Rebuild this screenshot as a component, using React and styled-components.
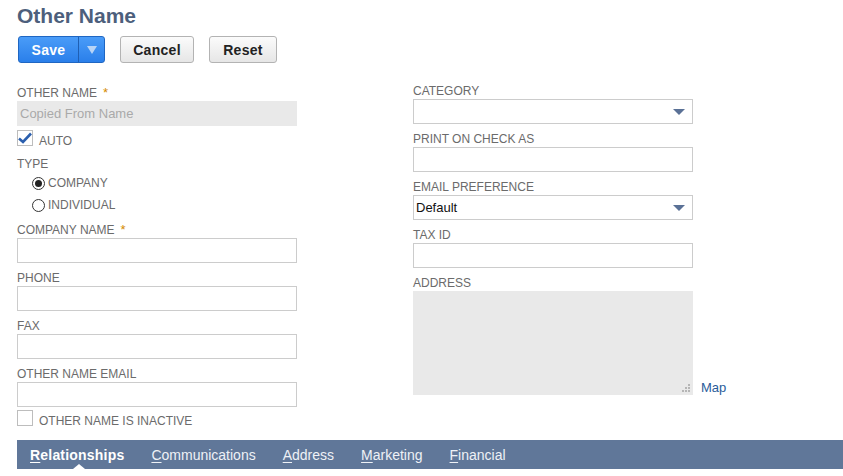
import React from 'react';
import styled, { createGlobalStyle } from 'styled-components';

const GlobalStyle = createGlobalStyle`
  body {
    margin: 0;
    background: #fff;
    font-family: "Liberation Sans", Arial, sans-serif;
  }
`;

const Page = styled.div`
  width: 843px;
  height: 476px;
  overflow: hidden;
  padding-top: 4px;
  box-sizing: border-box;
`;

const Title = styled.h1`
  margin: 0 0 0 17px;
  font-size: 21px;
  line-height: 24px;
  font-weight: 700;
  color: #4d5f7c;
`;

const Toolbar = styled.div`
  display: flex;
  gap: 15px;
  margin: 8px 0 0 18px;
  height: 27px;
`;

const SplitButton = styled.div`
  display: flex;
  border: 1px solid #1f66c2;
  border-radius: 3px;
  overflow: hidden;
  background: linear-gradient(#4a9cf8, #2a7fea);
`;

const SplitMain = styled.button`
  width: 60px;
  border: 0;
  border-right: 1px solid #1f5fb3;
  background: transparent;
  color: #fff;
  font: 700 14px "Liberation Sans", Arial, sans-serif;
  letter-spacing: 0.3px;
  padding: 0;
`;

const SplitArrow = styled.button`
  width: 25px;
  border: 0;
  background: transparent;
  display: flex;
  align-items: center;
  justify-content: center;
  padding: 0;

  &::after {
    content: '';
    border-left: 5px solid transparent;
    border-right: 5px solid transparent;
    border-top: 8px solid #b8d4f6;
  }
`;

const Button = styled.button`
  width: ${(p) => p.width}px;
  border: 1px solid #b3b3b3;
  border-radius: 3px;
  background: linear-gradient(#fbfbfb, #e6e6e6);
  color: #222;
  font: 700 14px "Liberation Sans", Arial, sans-serif;
  letter-spacing: 0.3px;
  padding: 0;
`;

const Columns = styled.div`
  display: flex;
  gap: 116px;
  margin: 21px 0 0 17px;
`;

const Column = styled.div`
  width: 280px;
  display: flex;
  flex-direction: column;
  padding-top: ${(p) => p.offset || 0}px;
`;

const Label = styled.div`
  font-size: 12px;
  line-height: 14px;
  color: #6b6b6b;
  margin-top: ${(p) => p.gap ?? 8}px;
  margin-bottom: 1px;
  white-space: nowrap;
`;

const Required = styled.span`
  color: #d48a00;
  margin-left: 6px;
  font-size: 13px;
`;

const Input = styled.div`
  height: 25px;
  box-sizing: border-box;
  border: 1px solid ${(p) => (p.disabled ? '#e9e9e9' : '#cccccc')};
  background: ${(p) => (p.disabled ? '#e9e9e9' : '#fff')};
  font-size: 13px;
  line-height: 23px;
  padding-left: 2px;
  color: ${(p) => (p.disabled ? '#a9a9a9' : '#111')};
`;

const Select = styled(Input)`
  position: relative;

  &::after {
    content: '';
    position: absolute;
    right: 7px;
    top: 9px;
    border-left: 6px solid transparent;
    border-right: 6px solid transparent;
    border-top: 6px solid #5a7196;
  }
`;

const CheckRow = styled.div`
  display: flex;
  align-items: flex-end;
  gap: 6px;
  margin-top: ${(p) => p.gap}px;
  height: 16px;
  font-size: 12px;
  line-height: 12px;
  color: #6b6b6b;

  & > span:last-child {
    position: relative;
    top: 1px;
  }
`;

const Box = styled.span`
  width: 16px;
  height: 16px;
  box-sizing: border-box;
  border: 1px solid #bdbdbd;
  background: #fff;
  display: flex;
  align-items: center;
  justify-content: center;
  flex-shrink: 0;
`;

const RadioRow = styled.div`
  display: flex;
  align-items: center;
  gap: 3px;
  height: 22px;
  padding-left: 15px;
  font-size: 12px;
  color: #6b6b6b;
`;

const Radio = styled.span`
  width: 13px;
  height: 13px;
  box-sizing: border-box;
  border: 1px solid #333;
  border-radius: 50%;
  display: flex;
  align-items: center;
  justify-content: center;

  &::after {
    content: '';
    width: 7px;
    height: 7px;
    border-radius: 50%;
    background: ${(p) => (p.checked ? '#222' : 'transparent')};
  }
`;

const AddressRow = styled.div`
  display: flex;
  align-items: flex-end;
  gap: 8px;
`;

const TextArea = styled.div`
  width: 280px;
  height: 104px;
  flex-shrink: 0;
  background: #e9e9e9;
  position: relative;
`;

const Grip = styled.svg`
  position: absolute;
  right: 2px;
  bottom: 2px;
`;

const MapLink = styled.a`
  font-size: 13px;
  line-height: 15px;
  color: #2a5c9a;
  text-decoration: none;
`;

const TabBar = styled.div`
  display: flex;
  margin: 14px 0 0 17px;
  height: 29px;
  background: #607799;
  padding-left: 13px;
  box-sizing: border-box;
`;

const Tab = styled.div`
  position: relative;
  display: flex;
  align-items: center;
  margin-right: 27px;
  font-size: 14px;
  letter-spacing: ${(p) => (p.active ? '0.2px' : '0')};
  font-weight: ${(p) => (p.active ? 700 : 400)};
  color: ${(p) => (p.active ? '#fff' : '#eef1f6')};

  u {
    text-decoration: underline;
    text-underline-offset: 2px;
  }

  ${(p) =>
    p.active &&
    `
    &::after {
      content: '';
      position: absolute;
      left: 43px;
      bottom: 0;
      border-left: 6px solid transparent;
      border-right: 6px solid transparent;
      border-bottom: 5px solid #fff;
    }
  `}
`;

const Check = () => (
  <svg width="14" height="12" viewBox="0 0 14 12">
    <path d="M1 6.5 L5 10 L13 1.5" fill="none" stroke="#2b5fae" strokeWidth="2.6" />
  </svg>
);

const tabs = ['Relationships', 'Communications', 'Address', 'Marketing', 'Financial'];

export default function App() {
  return (
    <Page>
      <GlobalStyle />
      <Title>Other Name</Title>
      <Toolbar>
        <SplitButton>
          <SplitMain>Save</SplitMain>
          <SplitArrow />
        </SplitButton>
        <Button width={74}>Cancel</Button>
        <Button width={68}>Reset</Button>
      </Toolbar>

      <Columns>
        <Column offset={2}>
          <Label gap={0}>
            OTHER NAME<Required>*</Required>
          </Label>
          <Input disabled>Copied From Name</Input>
          <CheckRow gap={4}>
            <Box>
              <Check />
            </Box>
            <span>AUTO</span>
          </CheckRow>
          <Label gap={11}>TYPE</Label>
          <RadioRow>
            <Radio checked />
            COMPANY
          </RadioRow>
          <RadioRow>
            <Radio />
            INDIVIDUAL
          </RadioRow>
          <Label gap={7}>
            COMPANY NAME<Required>*</Required>
          </Label>
          <Input />
          <Label>PHONE</Label>
          <Input />
          <Label>FAX</Label>
          <Input />
          <Label>OTHER NAME EMAIL</Label>
          <Input />
          <CheckRow gap={3}>
            <Box />
            <span>OTHER NAME IS INACTIVE</span>
          </CheckRow>
        </Column>

        <Column>
          <Label gap={0}>CATEGORY</Label>
          <Select />
          <Label>PRINT ON CHECK AS</Label>
          <Input />
          <Label>EMAIL PREFERENCE</Label>
          <Select>Default</Select>
          <Label>TAX ID</Label>
          <Input />
          <Label>ADDRESS</Label>
          <AddressRow>
            <TextArea>
              <Grip width="9" height="9" viewBox="0 0 9 9">
                <rect x="6" y="0" width="2" height="2" fill="#b5b5b5" />
                <rect x="3" y="3" width="2" height="2" fill="#b5b5b5" />
                <rect x="6" y="3" width="2" height="2" fill="#b5b5b5" />
                <rect x="0" y="6" width="2" height="2" fill="#b5b5b5" />
                <rect x="3" y="6" width="2" height="2" fill="#b5b5b5" />
                <rect x="6" y="6" width="2" height="2" fill="#b5b5b5" />
              </Grip>
            </TextArea>
            <MapLink href="#">Map</MapLink>
          </AddressRow>
        </Column>
      </Columns>

      <TabBar>
        {tabs.map((t, i) => (
          <Tab key={t} active={i === 0}>
            <span>
              <u>{t[0]}</u>
              {t.slice(1)}
            </span>
          </Tab>
        ))}
      </TabBar>
    </Page>
  );
}
